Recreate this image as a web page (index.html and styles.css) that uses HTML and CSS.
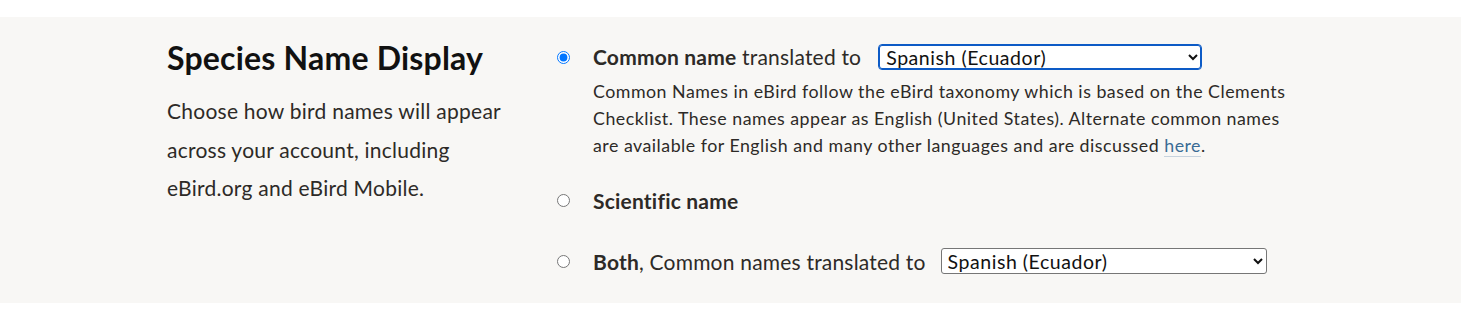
FILE: index.html
```html
<!DOCTYPE html>
<html lang="en">
<head>
<meta charset="utf-8">
<title>Species Name Display</title>
<link rel="stylesheet" href="styles.css">
</head>
<body>
<section class="band">
  <div class="container">
    <div class="intro">
      <h2 class="title">Species Name Display</h2>
      <p class="lead">Choose how bird names will appear across your account, including eBird.org and eBird Mobile.</p>
    </div>
    <div class="options">
      <div class="option">
        <input class="radio" type="radio" name="disp" checked>
        <div class="option-body">
          <div class="option-label"><strong>Common name</strong> translated to<select class="sel sel-focus"><option>Spanish (Ecuador)</option></select></div>
          <p class="help">Common Names in eBird follow the eBird taxonomy which is based on the Clements Checklist. These names appear as English (United States). Alternate common names are available for English and many other languages and are discussed <a href="#" class="link">here</a>.</p>
        </div>
      </div>
      <div class="option">
        <input class="radio" type="radio" name="disp">
        <div class="option-body">
          <div class="option-label"><strong>Scientific name</strong></div>
        </div>
      </div>
      <div class="option option-last">
        <input class="radio" type="radio" name="disp">
        <div class="option-body">
          <div class="option-label"><strong>Both</strong>, Common names translated to<select class="sel sel-wide"><option>Spanish (Ecuador)</option></select></div>
        </div>
      </div>
    </div>
  </div>
</section>
</body>
</html>
```

FILE: styles.css
```css
html, body {
  margin: 0;
  padding: 0;
  background: #ffffff;
}
body {
  font-family: Lato, "Noto Sans", sans-serif;
  color: #2d2a27;
  padding-top: 17px;
}
.band {
  background: #f8f7f5;
  height: 286px;
}
.container {
  display: grid;
  grid-template-columns: 390px 1fr;
  padding-left: 167px;
  padding-top: 22px;
}
.title {
  margin: 0;
  font-size: 32px;
  line-height: 38px;
  font-weight: 700;
  letter-spacing: 0.2px;
  color: #111;
}
.lead {
  margin: 15px 0 0;
  font-size: 21px;
  letter-spacing: 0.25px;
  line-height: 38.5px;
  width: 350px;
  color: #2d2a27;
}
.options {
  display: flex;
  flex-direction: column;
  gap: 30px;
  padding-top: 3px;
}
.option {
  display: flex;
  align-items: flex-start;
  gap: 23px;
}
.option-last {
  margin-top: 1px;
}
.radio {
  margin: 8.5px 0 0 0;
  width: 13px;
  height: 13px;
  flex: none;
}
.option-label {
  font-size: 21px;
  letter-spacing: 0.2px;
  line-height: 30px;
  height: 30px;
}
.option-label strong { font-weight: 700; }
.sel {
  font-family: Lato, "Noto Sans", sans-serif;
  font-size: 19.5px;
  letter-spacing: 0.55px;
  color: #111;
  background: #fff;
  height: 26px;
  padding: 0 2px;
  vertical-align: middle;
  position: relative;
  top: -3px;
  border: 1px solid #767676;
  border-radius: 3px;
}
.sel-focus {
  width: 324px;
  margin-left: 17px;
  border: 1px solid #0d5bc6;
  box-shadow: inset 0 0 0 1px #0d5bc6;
  border-radius: 4px;
  padding-left: 3px;
}
.sel-wide {
  width: 326px;
  margin-left: 15px;
}
.help {
  margin: 5.5px 0 -3px;
  font-size: 17.8px;
  letter-spacing: 0.5px;
  line-height: 27px;
  width: 700px;
  color: #2d2a27;
}
.link {
  color: #3a6b94;
  text-decoration: none;
  border-bottom: 1px solid #c7d3de;
}
```
